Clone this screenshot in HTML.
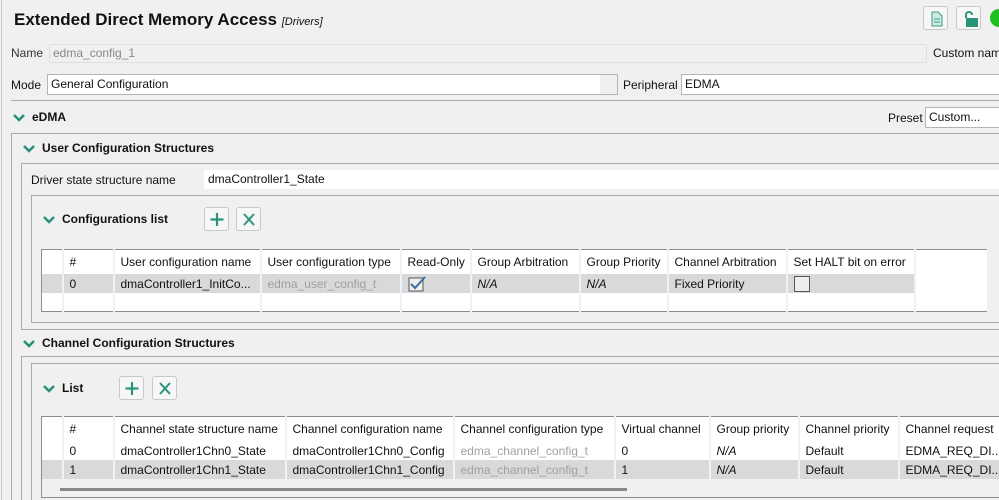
<!DOCTYPE html>
<html><head><meta charset="utf-8"><style>
*{margin:0;padding:0;box-sizing:border-box}
html{width:999px;height:500px;overflow:hidden}
body{width:999px;height:500px;overflow:hidden;background:#f0f0f0;font-family:"Liberation Sans","Noto Sans CJK KR",sans-serif;font-size:12px;color:#111;position:relative}
.a{position:absolute;white-space:nowrap}
.f{position:absolute;background:#fff;border:1px solid #b4b4b4;padding-left:3px;line-height:19px}
.box{position:absolute;border:1px solid #a9a9a9;border-right:none;border-bottom:none}
.chev{position:absolute;width:12px;height:10px}
.b{font-weight:bold}
.btn{position:absolute;width:25px;height:24px;border:1px solid #c8c8c8;border-radius:3px;background:#f7f7f7}
table{position:absolute;border-collapse:collapse;background:#fff;border:1px solid #8e8e8e;table-layout:fixed}
td{height:19px;padding:0 6px;border-right:2px solid #eef2f8;white-space:nowrap;overflow:hidden;padding-top:1px}
tr.h td{height:24px}
tr.g td{background:#d9d9d9}
.gr{color:#a0a0a0}
i{font-style:italic}
</style></head><body>
<div style="position:absolute;left:1px;top:0;width:1px;height:500px;background:#c8c8c8"></div>
<div class="a b" style="left:14px;top:10px;font-size:17px">Extended Direct Memory Access <i style="font-weight:normal;font-size:11px">[Drivers]</i></div>
<div class="btn" style="left:923px;top:6px"><svg width="25" height="24"><path d="M8 5h6l4 4v10H8z" fill="#cfe9e2" stroke="#3a9b85"/><path d="M10 12h6M10 15h6" stroke="#3a9b85"/></svg></div>
<div class="btn" style="left:956px;top:6px"><svg width="25" height="24"><path d="M9 11V8a3 3 0 0 1 6 0" fill="none" stroke="#2a9478" stroke-width="2"/><rect x="9" y="11" width="12" height="9" fill="#2a9478"/></svg></div>
<div style="position:absolute;left:990px;top:9px;width:18px;height:18px;border-radius:50%;background:#1ec01e"></div>

<div class="a" style="left:11px;top:46px;color:#333">Name</div>
<div class="f" style="left:49px;top:44px;width:878px;height:19px;background:#f0f0f0;border-color:#e0e0e0;color:#888;line-height:17px">edma_config_1</div>
<div class="a" style="left:933px;top:46px">Custom name</div>

<div class="a" style="left:11px;top:78px">Mode</div>
<div class="f" style="left:47px;top:74px;width:571px;height:21px">General Configuration</div>
<div style="position:absolute;left:600px;top:75px;width:17px;height:19px;background:#f0f0f0"></div>
<div class="a" style="left:623px;top:78px">Peripheral</div>
<div class="f" style="left:681px;top:74px;width:330px;height:21px">EDMA</div>
<div style="position:absolute;left:11px;top:100px;width:990px;height:1px;background:#aaa"></div>

<svg class="chev" style="left:13px;top:113px"><path d="M1 2l5 5 5-5" fill="none" stroke="#2a8f7a" stroke-width="2.5"/></svg>
<div class="a b" style="left:32px;top:110px">eDMA</div>
<div class="a" style="left:888px;top:111px">Preset</div>
<div class="f" style="left:925px;top:107px;width:80px;height:21px">Custom...</div>
<div style="position:absolute;left:11px;top:133px;width:990px;height:1px;background:#aaa"></div>

<div class="box" style="left:11px;top:133px;width:990px;height:367px"></div>
<svg class="chev" style="left:23px;top:144px"><path d="M1 2l5 5 5-5" fill="none" stroke="#2a8f7a" stroke-width="2.5"/></svg>
<div class="a b" style="left:42px;top:141px">User Configuration Structures</div>
<div class="box" style="left:21px;top:163px;width:980px;height:167px;border-bottom:1px solid #a9a9a9"></div>
<div class="a" style="left:31px;top:173px">Driver state structure name</div>
<div class="f" style="left:204px;top:170px;width:800px;height:19px;border-color:#fff;line-height:17px">dmaController1_State</div>
<div class="box" style="left:31px;top:195px;width:970px;height:128px;border-bottom:1px solid #a9a9a9"></div>
<svg class="chev" style="left:43px;top:215px"><path d="M1 2l5 5 5-5" fill="none" stroke="#2a8f7a" stroke-width="2.5"/></svg>
<div class="a b" style="left:62px;top:212px">Configurations list</div>
<div class="btn" style="left:204px;top:207px"><svg width="25" height="24"><path d="M12 5v13M5.5 11.5h13" stroke="#2a9478" stroke-width="2.2"/></svg></div>
<div class="btn" style="left:236px;top:207px"><svg width="25" height="24"><path d="M7 6l10 11M17 6L7 17" stroke="#2a9478" stroke-width="2"/></svg></div>
<table style="left:41px;top:249px;width:948px;height:62px">
<colgroup><col style="width:21px"><col style="width:51px"><col style="width:147px"><col style="width:140px"><col style="width:70px"><col style="width:109px"><col style="width:88px"><col style="width:119px"><col style="width:128px"><col></colgroup>
<tr class="h"><td></td><td>#</td><td>User configuration name</td><td>User configuration type</td><td>Read-Only</td><td>Group Arbitration</td><td>Group Priority</td><td>Channel Arbitration</td><td>Set HALT bit on error</td><td style="background:#fff"></td></tr>
<tr class="g"><td></td><td>0</td><td>dmaController1_InitCo...</td><td class="gr">edma_user_config_t</td><td><svg width="20" height="16" style="vertical-align:middle"><rect x="1" y="2" width="14" height="13" fill="#eee" stroke="#555"/><path d="M3 8l4 4 10-11" fill="none" stroke="#3a6ea5" stroke-width="2"/></svg></td><td><i>N/A</i></td><td><i>N/A</i></td><td>Fixed Priority</td><td><span style="display:inline-block;width:16px;height:16px;border:1px solid #555;background:#eee;vertical-align:middle"></span></td><td style="background:#fff"></td></tr>
<tr><td></td><td></td><td></td><td></td><td></td><td></td><td></td><td></td><td></td><td></td></tr>
</table>

<svg class="chev" style="left:23px;top:339px"><path d="M1 2l5 5 5-5" fill="none" stroke="#2a8f7a" stroke-width="2.5"/></svg>
<div class="a b" style="left:42px;top:336px">Channel Configuration Structures</div>
<div class="box" style="left:21px;top:356px;width:980px;height:144px"></div>
<div class="box" style="left:31px;top:363px;width:970px;height:137px"></div>
<svg class="chev" style="left:43px;top:384px"><path d="M1 2l5 5 5-5" fill="none" stroke="#2a8f7a" stroke-width="2.5"/></svg>
<div class="a b" style="left:62px;top:381px">List</div>
<div class="btn" style="left:119px;top:376px"><svg width="25" height="24"><path d="M12 5v13M5.5 11.5h13" stroke="#2a9478" stroke-width="2.2"/></svg></div>
<div class="btn" style="left:152px;top:376px"><svg width="25" height="24"><path d="M7 6l10 11M17 6L7 17" stroke="#2a9478" stroke-width="2"/></svg></div>
<table style="left:41px;top:416px;width:962px;height:82px">
<colgroup><col style="width:21px"><col style="width:51px"><col style="width:172px"><col style="width:168px"><col style="width:161px"><col style="width:95px"><col style="width:89px"><col style="width:100px"><col></colgroup>
<tr class="h"><td></td><td>#</td><td>Channel state structure name</td><td>Channel configuration name</td><td>Channel configuration type</td><td>Virtual channel</td><td>Group priority</td><td>Channel priority</td><td>Channel request</td></tr>
<tr><td></td><td>0</td><td>dmaController1Chn0_State</td><td>dmaController1Chn0_Config</td><td class="gr">edma_channel_config_t</td><td>0</td><td><i>N/A</i></td><td>Default</td><td>EDMA_REQ_DI...</td></tr>
<tr class="g"><td></td><td>1</td><td>dmaController1Chn1_State</td><td>dmaController1Chn1_Config</td><td class="gr">edma_channel_config_t</td><td>1</td><td><i>N/A</i></td><td>Default</td><td>EDMA_REQ_DI...</td></tr>
<tr><td colspan="9" style="height:18px;background:#f0f0f0"></td></tr>
</table>
<div style="position:absolute;left:60px;top:488px;width:567px;height:3px;background:#888"></div>
</body></html>
